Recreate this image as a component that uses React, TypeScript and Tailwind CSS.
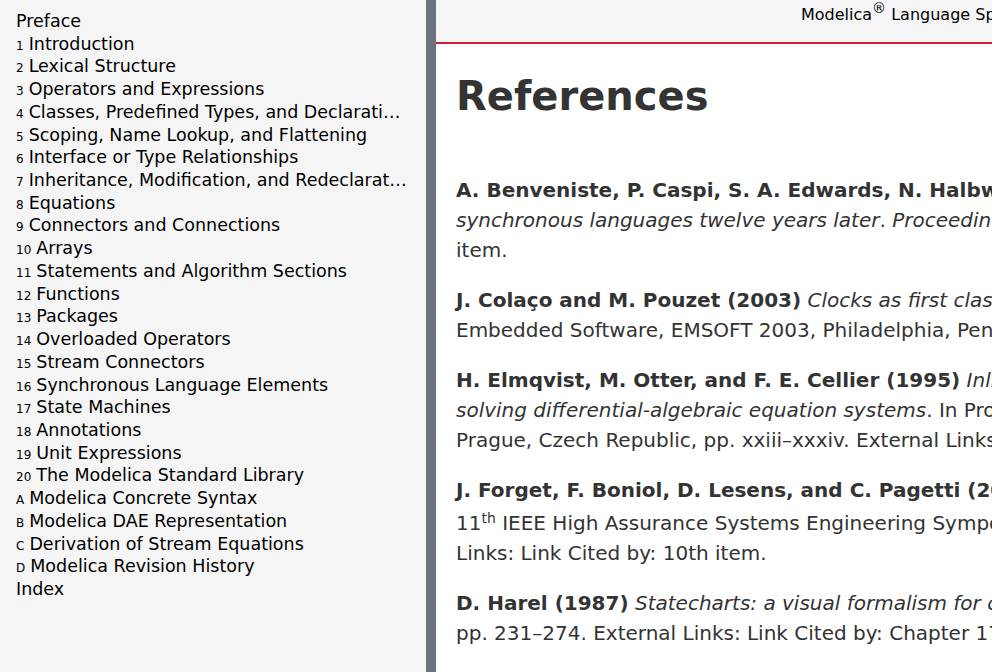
import React from "react";

const toc: [string, string][] = [
  ["", "Preface"],
  ["1", "Introduction"],
  ["2", "Lexical Structure"],
  ["3", "Operators and Expressions"],
  ["4", "Classes, Predefined Types, and Declarati…"],
  ["5", "Scoping, Name Lookup, and Flattening"],
  ["6", "Interface or Type Relationships"],
  ["7", "Inheritance, Modification, and Redeclarat…"],
  ["8", "Equations"],
  ["9", "Connectors and Connections"],
  ["10", "Arrays"],
  ["11", "Statements and Algorithm Sections"],
  ["12", "Functions"],
  ["13", "Packages"],
  ["14", "Overloaded Operators"],
  ["15", "Stream Connectors"],
  ["16", "Synchronous Language Elements"],
  ["17", "State Machines"],
  ["18", "Annotations"],
  ["19", "Unit Expressions"],
  ["20", "The Modelica Standard Library"],
  ["A", "Modelica Concrete Syntax"],
  ["B", "Modelica DAE Representation"],
  ["C", "Derivation of Stream Equations"],
  ["D", "Modelica Revision History"],
  ["", "Index"],
];

const font = { fontFamily: '"DejaVu Sans", Verdana, sans-serif' };

export default function App() {
  return (
    <div className="flex h-[672px] w-[992px] overflow-hidden bg-white" style={font}>
      <nav className="w-[426px] shrink-0 bg-[#f5f5f5] pl-4 pt-[10px] text-[17.5px] leading-[22.72px] text-black">
        {toc.map(([n, t]) => (
          <div key={t} className="h-[22.72px] whitespace-nowrap">
            {n && <span className="mr-[5px] text-[12px] leading-none">{n}</span>}
            {t}
          </div>
        ))}
      </nav>
      <div className="w-[10px] shrink-0 bg-[#6c737e]" />
      <main className="min-w-0 flex-1 overflow-hidden">
        <header className="h-[44px] border-b-2 border-[#d41f2e] bg-[#f5f5f5] pl-[365px] pt-[4px] text-[16px] leading-[22px] whitespace-nowrap text-black">
          Modelica<sup className="text-[14px] leading-none">®</sup> Language Specification version 3.6
        </header>
        <div className="pl-5 text-[20px] leading-[30px] text-[#333333] whitespace-nowrap">
          <h1 className="mt-[22px] mb-[49px] text-[40px] leading-[60px] font-bold">References</h1>
          <div className="mb-5">
            <div>
              <b>A. Benveniste, P. Caspi, S. A. Edwards, N. Halbwachs, P. Le Guernic, and R. de Simone (2003)</b>{" "}
              <i>The</i>
            </div>
            <div>
              <i>synchronous languages twelve years later</i>. <i>Proceedings of the IEEE</i> 91 (1), pp. 64–83. External Links: Link Cited by: 10th
            </div>
            <div>item.</div>
          </div>
          <div className="mb-5">
            <div>
              <b>J. Colaço and M. Pouzet (2003)</b> <i>Clocks as first class abstract types</i>. In Third International Conference on
            </div>
            <div>Embedded Software, EMSOFT 2003, Philadelphia, Pennsylvania, USA, October 13-15, 2003,</div>
          </div>
          <div className="mb-5">
            <div>
              <b>H. Elmqvist, M. Otter, and F. E. Cellier (1995)</b> <i>Inline integration: a new mixed symbolic/numeric approach for</i>
            </div>
            <div>
              <i>solving differential-algebraic equation systems</i>. In Proceedings of ESM'95, SCS European Simulation Multiconference,
            </div>
            <div>Prague, Czech Republic, pp. xxiii–xxxiv. External Links: Link Cited by: 17th item.</div>
          </div>
          <div className="mb-5">
            <div>
              <b>J. Forget, F. Boniol, D. Lesens, and C. Pagetti (2008)</b> <i>A multi-periodic synchronous data-flow language</i>. In
            </div>
            <div className="h-[33px] pt-[3px]">
              11<sup className="text-[14px] leading-none">th</sup> IEEE High Assurance Systems Engineering Symposium (HASE 2008), pp. 251–260. External
            </div>
            <div>Links: Link Cited by: 10th item.</div>
          </div>
          <div>
            <div>
              <b>D. Harel (1987)</b> <i>Statecharts: a visual formalism for complex systems</i>. Science of Computer Programming 8 (3),
            </div>
            <div>pp. 231–274. External Links: Link Cited by: Chapter 17.</div>
          </div>
        </div>
      </main>
    </div>
  );
}
